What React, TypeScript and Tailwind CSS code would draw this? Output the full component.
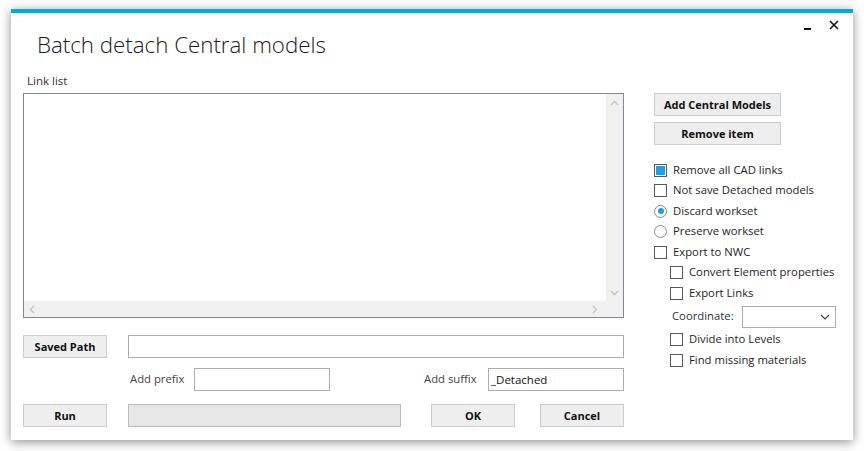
import React from "react";

function Btn({ label, className }: { label: string; className?: string }) {
  return (
    <button
      type="button"
      className={`h-[23px] border border-[#cccccc] bg-[#eeeeee] text-[11px] font-bold text-[#111] leading-none ${className ?? ""}`}
    >
      {label}
    </button>
  );
}

function Check({ checked, label }: { checked?: boolean; label: string }) {
  return (
    <div className="flex h-[20.5px] items-center">
      <span className="flex h-[13px] w-[13px] items-center justify-center border border-[#5a5a5a] bg-white">
        {checked && <span className="h-[9px] w-[9px] bg-[#1ba1e2]" />}
      </span>
      <span className="ml-[6px] text-[11.3px] text-[#1e1e1e]">{label}</span>
    </div>
  );
}

function Radio({ checked, label }: { checked?: boolean; label: string }) {
  return (
    <div className="flex h-[20.5px] items-center">
      <span className="flex h-[13px] w-[13px] items-center justify-center rounded-full border border-[#8a8a8a] bg-white">
        {checked && <span className="h-[6px] w-[6px] rounded-full bg-[#1ba1e2]" />}
      </span>
      <span className="ml-[6px] text-[11.3px] text-[#1e1e1e]">{label}</span>
    </div>
  );
}

function Chevron({ d }: { d: string }) {
  return (
    <svg width="9" height="9" viewBox="0 0 9 9" fill="none" stroke="#c2c2c2" strokeWidth="1.3">
      <path d={d} />
    </svg>
  );
}

export default function App() {
  return (
    <div className="min-h-screen bg-white pl-[11px] pt-[9px] font-['Open_Sans','Noto_Sans',sans-serif]">
      <div className="flex h-[431px] w-[842px] flex-col border-t-4 border-[#00acd8] bg-white shadow-[0_2px_10px_rgba(0,0,0,0.45)]">
        {/* header */}
        <div className="flex h-[57px] items-start">
          <h1 className="ml-[26px] mt-[17px] text-[22.3px] font-light leading-[30px] text-[#1a1a1a]">
            Batch detach Central models
          </h1>
          <div className="ml-auto mr-[14px] mt-[6px] flex items-center gap-[18px]">
            <span className="mt-[9px] h-[2px] w-[7px] bg-[#111]" />
            <svg width="10" height="10" viewBox="0 0 10 10" stroke="#111" strokeWidth="1.6">
              <path d="M1 1 L9 9 M9 1 L1 9" />
            </svg>
          </div>
        </div>

        <div className="h-[23px] pl-[16px] pt-[2px] text-[11.5px] leading-[17px] text-[#333]">Link list</div>

        <div className="flex gap-[30px] pl-[12px]">
          {/* left column */}
          <div className="flex w-[601px] flex-col">
            <div className="flex h-[225px] flex-col border border-[#828790] bg-white">
              <div className="flex flex-1">
                <div className="flex-1" />
                <div className="flex w-[17px] flex-col items-center justify-between bg-[#f0f0f0] pb-[4px] pt-[5px]">
                  <Chevron d="M1 6 L4.5 2.5 L8 6" />
                  <Chevron d="M1 3 L4.5 6.5 L8 3" />
                </div>
              </div>
              <div className="flex h-[16px] items-center justify-between bg-[#f0f0f0] pl-[4px] pr-[24px]">
                <Chevron d="M6 1 L2.5 4.5 L6 8" />
                <Chevron d="M3 1 L6.5 4.5 L3 8" />
              </div>
            </div>

            <div className="mt-[17px] flex">
              <Btn label="Saved Path" className="w-[84px]" />
              <div className="ml-[21px] h-[23px] flex-1 border border-[#abadb3] bg-white" />
            </div>

            <div className="mt-[10px] flex items-center">
              <span className="ml-[107px] w-[64px] text-[11.3px] text-[#444]">Add prefix</span>
              <div className="h-[23px] w-[136px] border border-[#abadb3] bg-white" />
              <span className="ml-auto w-[64px] text-[11.3px] text-[#444]">Add suffix</span>
              <div className="flex h-[23px] w-[136px] items-center border border-[#abadb3] bg-white pl-[2px] text-[11.5px] text-[#111]">
                _Detached
              </div>
            </div>

            <div className="mt-[13px] flex">
              <Btn label="Run" className="w-[84px]" />
              <div className="ml-[21px] h-[23px] w-[273px] border border-[#bcbcbc] bg-[#e6e6e6]" />
              <Btn label="OK" className="ml-[30px] w-[84px]" />
              <Btn label="Cancel" className="ml-[25px] w-[84px]" />
            </div>
          </div>

          {/* right column */}
          <div className="flex flex-col">
            <Btn label="Add Central Models" className="w-[127px]" />
            <Btn label="Remove item" className="mt-[6px] w-[127px]" />
            <div className="mt-[15px] flex flex-col">
              <Check checked label="Remove all CAD links" />
              <Check label="Not save Detached models" />
              <Radio checked label="Discard workset" />
              <Radio label="Preserve workset" />
              <Check label="Export to NWC" />
              <div className="pl-[16px]">
                <Check label="Convert Element properties" />
                <Check label="Export Links" />
              </div>
              <div className="flex h-[26px] items-center pl-[18px]">
                <span className="w-[70px] text-[11.3px] text-[#333]">Coordinate:</span>
                <div className="flex h-[22px] w-[94px] items-center justify-end border border-[#abadb3] bg-white pr-[5px]">
                  <svg width="10" height="6" viewBox="0 0 10 6" fill="none" stroke="#444" strokeWidth="1.2">
                    <path d="M1 1 L5 5 L9 1" />
                  </svg>
                </div>
              </div>
              <div className="pl-[16px]">
                <Check label="Divide into Levels" />
                <Check label="Find missing materials" />
              </div>
            </div>
          </div>
        </div>
      </div>
    </div>
  );
}
